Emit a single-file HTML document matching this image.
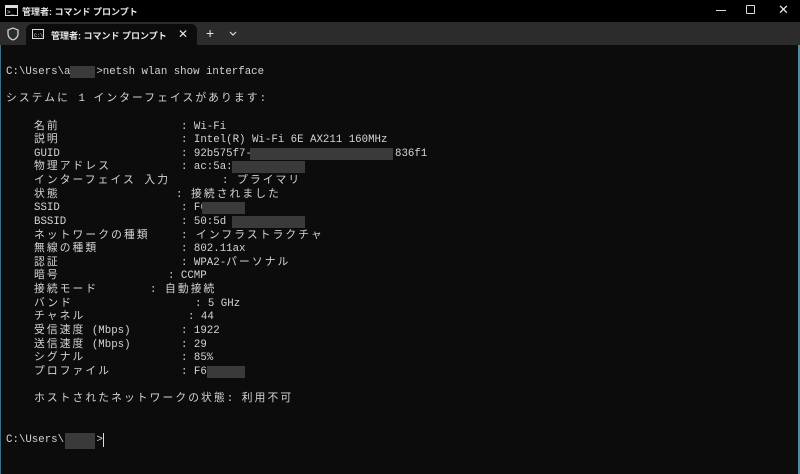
<!DOCTYPE html><html><head><meta charset="utf-8"><style>
body{margin:0;width:800px;height:474px;background:#0c0c0c;overflow:hidden;position:relative;font-family:"Liberation Mono","Noto Sans CJK JP",monospace;}
.t{position:absolute;color:#d4d4d4;font-size:10.75px;line-height:13px;white-space:pre;}
.j{letter-spacing:2.1px}
.n{letter-spacing:0}
.b{position:absolute;background:#3a3a3a;height:12px}
#title{position:absolute;left:0;top:0;width:800px;height:22px;background:#000}
#tabs{position:absolute;left:0;top:22px;width:800px;height:23px;background:#2c2c2c}
#tab{position:absolute;left:26px;top:24px;width:171px;height:21px;background:#0c0c0c;border-radius:6px 6px 0 0}
.ui{position:absolute;color:#e8e8e8;font-family:"Liberation Sans","Noto Sans CJK JP",sans-serif;font-size:9px;font-weight:bold;white-space:pre}
</style></head><body>
<div id="title"></div>
<svg style="position:absolute;left:5px;top:5px" width="13" height="11"><rect x="0.5" y="0.5" width="12" height="10" fill="none" stroke="#ddd"/><rect x="1" y="1" width="11" height="2" fill="#ddd"/><text x="2" y="9" font-size="6" fill="#ddd" font-family="Liberation Mono">&gt;_</text></svg>
<div class="ui" style="left:22px;top:5px">管理者: コマンド プロンプト</div>
<div style="position:absolute;left:716px;top:10px;width:10px;height:1px;background:#ddd"></div>
<div style="position:absolute;left:746px;top:5px;width:7px;height:7px;border:1px solid #ddd;border-radius:1px"></div>
<div class="ui" style="left:778px;top:2px;font-size:13px;font-weight:normal">✕</div>
<div id="tabs"></div>
<div id="tab"></div>
<svg style="position:absolute;left:7px;top:27px" width="12" height="14"><path d="M6 1 L11 3 V7 C11 10 8.5 12 6 13 C3.5 12 1 10 1 7 V3 Z" fill="none" stroke="#ddd" stroke-width="1.2"/></svg>
<svg style="position:absolute;left:32px;top:29px" width="12" height="10"><rect x="0.5" y="0.5" width="11" height="9" fill="none" stroke="#ddd"/><text x="2" y="8" font-size="5" fill="#ddd" font-family="Liberation Mono">C:\</text></svg>
<div class="ui" style="left:51px;top:29px">管理者: コマンド プロンプト</div>
<div class="ui" style="left:178px;top:27px;font-size:12px;font-weight:normal">✕</div>
<div class="ui" style="left:206px;top:25px;font-size:14px;font-weight:normal">+</div>
<svg style="position:absolute;left:229px;top:31px" width="8" height="6"><path d="M1 1 L4 4 L7 1" fill="none" stroke="#ddd" stroke-width="1.2"/></svg>
<div style="position:absolute;left:0;top:45px;width:1px;height:429px;background:#3a6f86"></div>
<div style="position:absolute;right:0;top:45px;width:2px;height:429px;background:#4f8ba5"></div>

<div class="t" style="left:6px;top:66px">C:\Users\a    &gt;netsh wlan show interface</div><div class="b" style="left:70px;top:66px;width:25px"></div>
<div class="t j" style="left:6px;top:93px">システムに <span class="n">1</span> インターフェイスがあります<span class="n">:</span></div>
<div class="t j" style="left:34px;top:121px">名前</div><div class="t" style="left:181px;top:121px">: Wi-Fi</div>
<div class="t j" style="left:34px;top:134px">説明</div><div class="t" style="left:181px;top:134px">: Intel(R) Wi-Fi 6E AX211 160MHz</div>
<div class="t" style="left:34px;top:148px">GUID</div><div class="t" style="left:181px;top:148px">: 92b575f7-</div><div class="t" style="left:395px;top:148px">836f1</div><div class="b" style="left:250px;top:148px;width:143px"></div>
<div class="t j" style="left:34px;top:161px">物理アドレス</div><div class="t" style="left:181px;top:161px">: ac:5a:</div><div class="b" style="left:232px;top:161px;width:73px"></div>
<div class="t j" style="left:34px;top:175px">インターフェイス 入力</div><div class="t j" style="left:222px;top:175px"><span class="n">:</span> プライマリ</div>
<div class="t j" style="left:34px;top:189px">状態</div><div class="t j" style="left:176px;top:189px"><span class="n">:</span> 接続されました</div>
<div class="t" style="left:34px;top:202px">SSID</div><div class="t" style="left:181px;top:202px">: F6</div><div class="b" style="left:202px;top:202px;width:43px"></div>
<div class="t" style="left:34px;top:216px">BSSID</div><div class="t" style="left:181px;top:216px">: 50:5d</div><div class="b" style="left:232px;top:216px;width:73px"></div>
<div class="t j" style="left:34px;top:230px">ネットワークの種類</div><div class="t j" style="left:181px;top:230px"><span class="n">:</span> インフラストラクチャ</div>
<div class="t j" style="left:34px;top:243px">無線の種類</div><div class="t" style="left:181px;top:243px">: 802.11ax</div>
<div class="t j" style="left:34px;top:257px">認証</div><div class="t" style="left:181px;top:257px">: WPA2-<span class="j">パーソナル</span></div>
<div class="t j" style="left:34px;top:270px">暗号</div><div class="t" style="left:168px;top:270px">: CCMP</div>
<div class="t j" style="left:34px;top:284px">接続モード</div><div class="t j" style="left:150px;top:284px"><span class="n">:</span> 自動接続</div>
<div class="t j" style="left:34px;top:298px">バンド</div><div class="t" style="left:195px;top:298px">: 5 GHz</div>
<div class="t j" style="left:34px;top:311px">チャネル</div><div class="t" style="left:188px;top:311px">: 44</div>
<div class="t" style="left:34px;top:325px"><span class="j">受信速度</span> (Mbps)</div><div class="t" style="left:181px;top:325px">: 1922</div>
<div class="t" style="left:34px;top:339px"><span class="j">送信速度</span> (Mbps)</div><div class="t" style="left:181px;top:339px">: 29</div>
<div class="t j" style="left:34px;top:352px">シグナル</div><div class="t" style="left:181px;top:352px">: 85%</div>
<div class="t j" style="left:34px;top:366px">プロファイル</div><div class="t" style="left:181px;top:366px">: F6</div><div class="b" style="left:207px;top:366px;width:38px"></div>
<div class="t j" style="left:34px;top:393px">ホストされたネットワークの状態<span class="n">:</span> 利用不可</div>
<div class="t" style="left:6px;top:434px">C:\Users\     &gt;</div><div class="b" style="left:65px;top:433px;width:30px;height:16px"></div>
<div style="position:absolute;left:103px;top:433px;width:1px;height:14px;background:#ddd"></div>
</body></html>
